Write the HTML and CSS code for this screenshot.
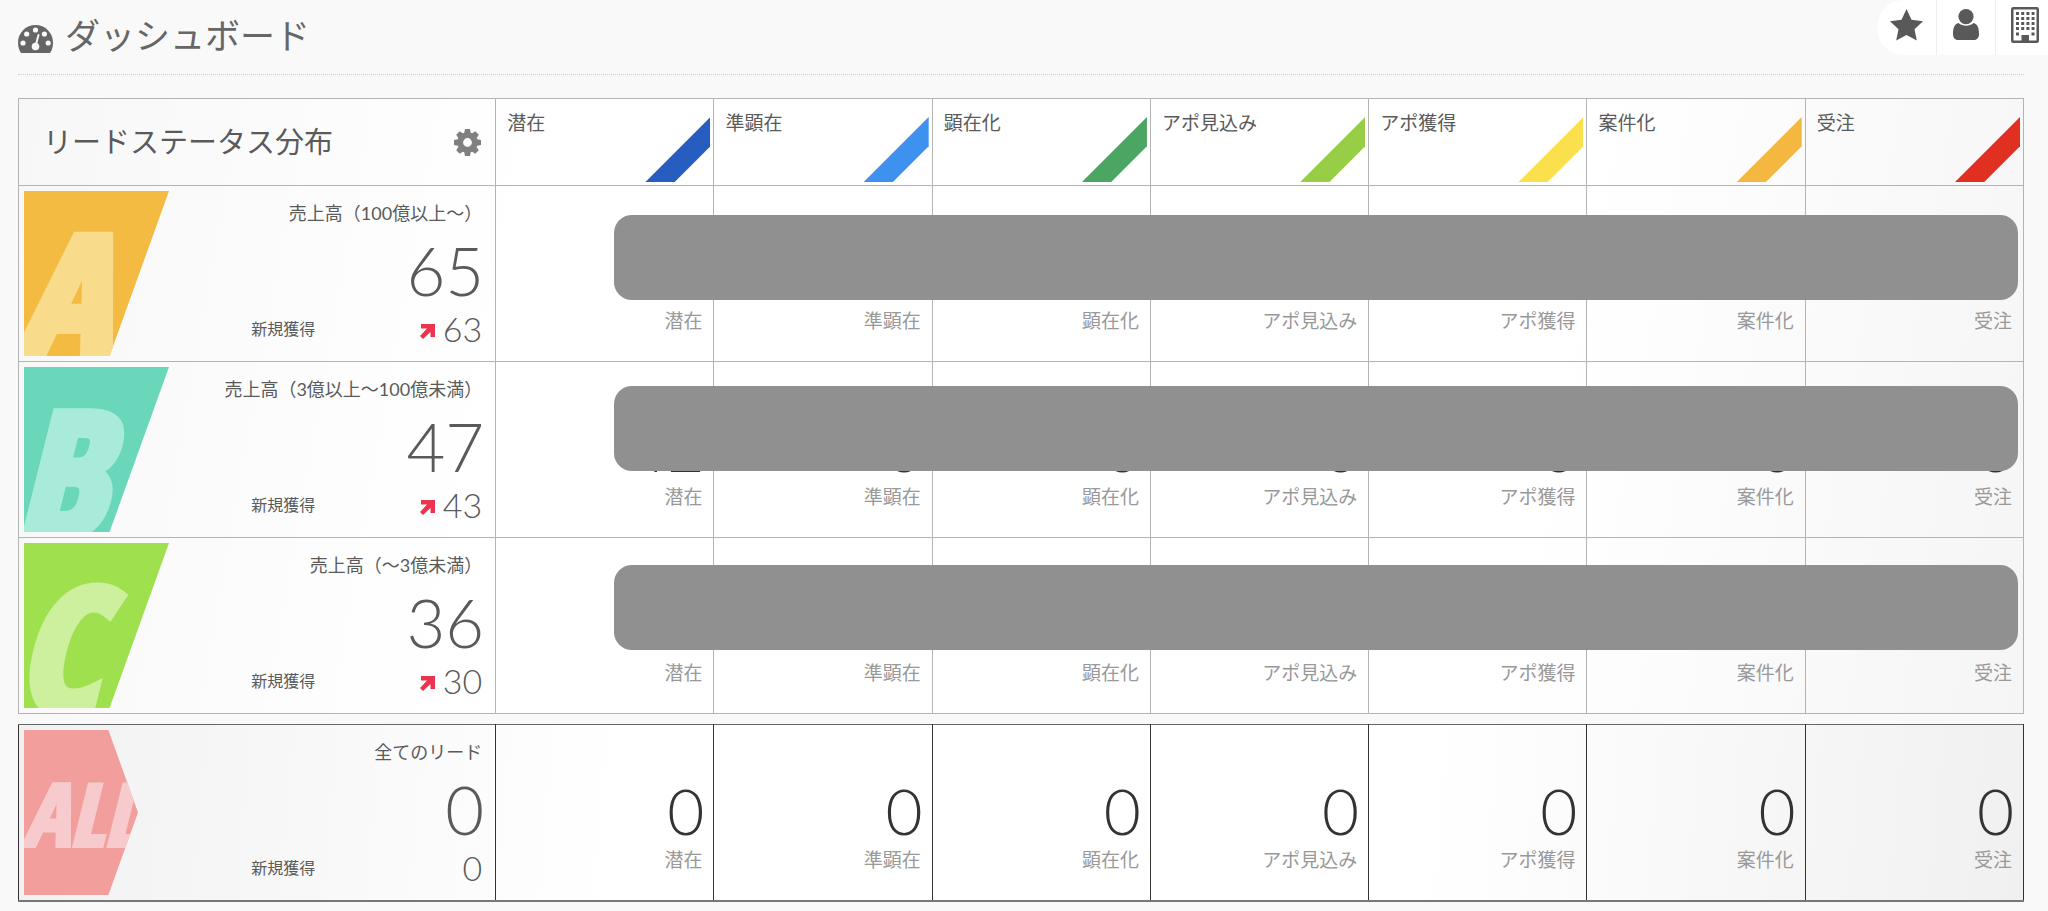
FILE: index.html
```html
<!DOCTYPE html>
<html lang="ja">
<head>
  <meta charset="UTF-8">
  <meta name="viewport" content="width=device-width, initial-scale=1.0">
  <title>ダッシュボード</title>
  <link rel="stylesheet" href="styles.css">
</head>
<body>
  <header class="page-header">
    <h1>
      <svg class="icon-dashboard" viewBox="0 0 35 28">
        <path fill="#666" d="M3 28C1 25 0 21.500 0 17.500a17.500 17.500 0 0 1 35 0c0 4-1 7.500-3 10.500z"/>
        <g fill="#f9f9f9">
          <circle cx="5" cy="18" r="2.600"/><circle cx="8.700" cy="9" r="2.600"/><circle cx="17.500" cy="5" r="2.600"/>
          <circle cx="26.400" cy="9" r="2.600"/><circle cx="30.200" cy="18" r="2.600"/><circle cx="17.500" cy="21.500" r="3.800"/>
        </g>
        <path stroke="#f9f9f9" stroke-width="2" stroke-linecap="round" d="M17.800 20L20.500 10"/>
      </svg>
      ダッシュボード
    </h1>
    <nav class="tools">
      <a href="#" aria-label="star">
        <svg width="33" height="32" viewBox="0 0 33 32"><path fill="#595959" d="M16.500 0l5 10.800 11.500 1.400-8.500 8 2.300 11.400-10.300-5.700-10.300 5.700 2.300-11.400-8.500-8 11.500-1.400z"/></svg>
      </a>
      <a href="#" aria-label="user">
        <svg width="26" height="31" viewBox="0 0 26 31"><circle cx="13" cy="7.600" r="7.600" fill="#595959"/><path fill="#595959" d="M5.500 14c4 3.600 11 3.600 15 0 4 .800 5.500 5 5.500 11 0 3.500-1.700 6-5 6H5c-3.300 0-5-2.500-5-6 0-6 1.500-10.200 5.500-11z"/></svg>
      </a>
      <a href="#" aria-label="building">
        <svg width="28" height="36" viewBox="0 0 28 36">
          <rect x="1.250" y="1.250" width="25.500" height="33.500" rx="1" fill="none" stroke="#595959" stroke-width="2.500"/>
          <path stroke="#595959" stroke-width="3" stroke-dasharray="3 2.200" d="M5 6.500h18.500M5 11.500h18.500M5 16.500h18.500M5 21.500h18.500"/>
          <path fill="#595959" d="M5 25.500h3v3H5zM20.500 25.500h3v3h-3zM10.500 28h7.500v7h-7.500z"/>
        </svg>
      </a>
    </nav>
  </header>

  <main>
    <table class="board">
      <thead>
        <tr>
          <th class="lead-col">
            <div class="board-title">
              <h2>リードステータス分布</h2>
              <button class="gear" aria-label="settings">
                <svg width="27" height="27" viewBox="0 0 27 27">
                  <g fill="#808080">
                    <path id="tooth" d="M11 0h5l1 5h-7zM11 27h5l1-5h-7z"/>
                    <use href="#tooth" transform="rotate(45 13.5 13.5)"/>
                    <use href="#tooth" transform="rotate(90 13.5 13.5)"/>
                    <use href="#tooth" transform="rotate(135 13.5 13.5)"/>
                  </g>
                  <circle cx="13.500" cy="13.500" r="7.300" fill="none" stroke="#808080" stroke-width="5.800"/>
                </svg>
              </button>
            </div>
          </th>
          <th><div class="status">潜在<span class="stripe navy"></span></div></th>
          <th><div class="status">準顕在<span class="stripe blue"></span></div></th>
          <th><div class="status">顕在化<span class="stripe green"></span></div></th>
          <th><div class="status">アポ見込み<span class="stripe lime"></span></div></th>
          <th><div class="status">アポ獲得<span class="stripe yellow"></span></div></th>
          <th><div class="status">案件化<span class="stripe orange"></span></div></th>
          <th><div class="status">受注<span class="stripe red"></span></div></th>
        </tr>
      </thead>
      <tbody>
        <tr class="rank-a">
          <td>
            <div class="lead">
              <div class="badge badge-a"><span>A</span></div>
              <div class="lead-info">
                <p class="range">売上高（100億以上～）</p>
                <p class="total">65</p>
                <p class="new"><span>新規獲得</span><span class="count"><svg class="arrow" viewBox="0 0 15 15"><path d="M1 0h14v13h-4.500V8L3 15l-3-3 7-7.500H1z"/></svg>63</span></p>
              </div>
            </div>
            <div class="mask"></div>
          </td>
          <td><div class="cell"><span class="num"></span>潜在</div></td>
          <td><div class="cell"><span class="num"></span>準顕在</div></td>
          <td><div class="cell"><span class="num"></span>顕在化</div></td>
          <td><div class="cell"><span class="num"></span>アポ見込み</div></td>
          <td><div class="cell"><span class="num"></span>アポ獲得</div></td>
          <td><div class="cell"><span class="num"></span>案件化</div></td>
          <td><div class="cell"><span class="num"></span>受注</div></td>
        </tr>
        <tr class="rank-b">
          <td>
            <div class="lead">
              <div class="badge badge-b"><span>B</span></div>
              <div class="lead-info">
                <p class="range">売上高（3億以上～100億未満）</p>
                <p class="total">47</p>
                <p class="new"><span>新規獲得</span><span class="count"><svg class="arrow" viewBox="0 0 15 15"><path d="M1 0h14v13h-4.500V8L3 15l-3-3 7-7.500H1z"/></svg>43</span></p>
              </div>
            </div>
            <div class="mask"></div>
          </td>
          <td><div class="cell"><span class="num">42</span>潜在</div></td>
          <td><div class="cell"><span class="num">0</span>準顕在</div></td>
          <td><div class="cell"><span class="num">0</span>顕在化</div></td>
          <td><div class="cell"><span class="num">0</span>アポ見込み</div></td>
          <td><div class="cell"><span class="num">0</span>アポ獲得</div></td>
          <td><div class="cell"><span class="num">0</span>案件化</div></td>
          <td><div class="cell"><span class="num">0</span>受注</div></td>
        </tr>
        <tr class="rank-c">
          <td>
            <div class="lead">
              <div class="badge badge-c"><span>C</span></div>
              <div class="lead-info">
                <p class="range">売上高（～3億未満）</p>
                <p class="total">36</p>
                <p class="new"><span>新規獲得</span><span class="count"><svg class="arrow" viewBox="0 0 15 15"><path d="M1 0h14v13h-4.500V8L3 15l-3-3 7-7.500H1z"/></svg>30</span></p>
              </div>
            </div>
            <div class="mask"></div>
          </td>
          <td><div class="cell"><span class="num"></span>潜在</div></td>
          <td><div class="cell"><span class="num"></span>準顕在</div></td>
          <td><div class="cell"><span class="num"></span>顕在化</div></td>
          <td><div class="cell"><span class="num"></span>アポ見込み</div></td>
          <td><div class="cell"><span class="num"></span>アポ獲得</div></td>
          <td><div class="cell"><span class="num"></span>案件化</div></td>
          <td><div class="cell"><span class="num"></span>受注</div></td>
        </tr>
      </tbody>
    </table>

    <table class="board board-all">
      <tbody>
        <tr>
          <td class="lead-col">
            <div class="lead">
              <div class="badge badge-all"><span>ALL</span></div>
              <div class="lead-info">
                <p class="range">全てのリード</p>
                <p class="total">0</p>
                <p class="new"><span>新規獲得</span><span class="count">0</span></p>
              </div>
            </div>
          </td>
          <td><div class="cell"><span class="num">0</span>潜在</div></td>
          <td><div class="cell"><span class="num">0</span>準顕在</div></td>
          <td><div class="cell"><span class="num">0</span>顕在化</div></td>
          <td><div class="cell"><span class="num">0</span>アポ見込み</div></td>
          <td><div class="cell"><span class="num">0</span>アポ獲得</div></td>
          <td><div class="cell"><span class="num">0</span>案件化</div></td>
          <td><div class="cell"><span class="num">0</span>受注</div></td>
        </tr>
      </tbody>
    </table>
  </main>
</body>
</html>
```
FILE: styles.css
```css
* {
  box-sizing: border-box;
}
body {
  margin: 0;
  background: #f9f9f9;
  color: #5a5a5a;
  font-family: Lato, "Noto Sans CJK JP", sans-serif;
  font-size: 19px;
  overflow-x: hidden;
}
h1, h2, p {
  margin: 0;
  font-weight: normal;
}

/* header */
.page-header {
  display: flex;
  justify-content: space-between;
  align-items: flex-start;
  height: 75px;
  margin: 0 24px 23px 18px;
  border-bottom: 1px dotted #d0d0d0;
}
h1 {
  display: flex;
  align-items: center;
  gap: 12px;
  height: 70px;
  color: #666;
  font-size: 35px;
  line-height: 70px;
}
.icon-dashboard {
  width: 35px;
  height: 28px;
  margin-top: 8px;
}
.tools {
  display: flex;
  margin-right: -30px;
  background: #fff;
  border-radius: 28px 0 0 28px;
}
.tools a {
  display: flex;
  align-items: center;
  justify-content: center;
  width: 59px;
  height: 55px;
  padding-bottom: 6px;
  border-left: 1px solid #eee;
}
.tools a:first-child {
  border-left: none;
}

/* table */
.board {
  width: calc(100% - 42px);
  margin: 0 24px 10px 18px;
  border-collapse: collapse;
  table-layout: fixed;
  background: linear-gradient(100deg, #f7f7f7, #fff 25%, #fff 75%, #f5f5f5);
}
.board th, .board td {
  padding: 0;
  border: 1px solid #b4b4b4;
  font-weight: normal;
  text-align: left;
}
.board .lead-col {
  width: 23.8%;
}
.board tr {
  position: relative;
}
.board-title {
  display: flex;
  align-items: center;
  justify-content: space-between;
  height: 86px;
  padding: 0 14px 0 24px;
}
h2 {
  padding-bottom: 4px;
  font-size: 29px;
}
.gear {
  display: flex;
  padding: 0;
  border: none;
  background: none;
  cursor: pointer;
}
.status {
  display: flex;
  justify-content: space-between;
  height: 86px;
  padding: 10px 3px 3px 11px;
  line-height: 28px;
}
.stripe {
  align-self: flex-end;
  width: 65px;
  height: 65px;
  clip-path: polygon(100% 0, 100% 45%, 45% 100%, 0 100%);
}
.navy { background: #275dc0; }
.blue { background: #3f91ef; }
.green { background: #4ca663; }
.lime { background: #97ce45; }
.yellow { background: #fbe04d; }
.orange { background: #f4b740; }
.red { background: #e03022; }

/* rank cell */
.lead {
  display: flex;
  height: 175px;
  padding: 5px 11px 5px 5px;
}
.badge {
  display: flex;
  align-items: flex-end;
  flex: none;
  width: 145px;
  overflow: hidden;
  clip-path: polygon(0 0, 100% 0, 59% 100%, 0 100%);
  font-family: "Open Sans Condensed", "Open Sans", sans-serif;
  font-size: 172px;
  font-stretch: condensed;
  font-style: italic;
  font-weight: 800;
  line-height: 126px;
  text-indent: -8px;
  -webkit-text-stroke: 10px;
}
.badge-a { background: #f4bb42; color: #f8dc8c; }
.badge-b { background: #6bd7ba; color: #a8ebda; }
.badge-c { background: #9fe04f; color: #cdf09e; }
.badge-all {
  align-items: center;
  width: 114px;
  background: #f29e9c;
  color: #f7cbcd;
  clip-path: polygon(0 0, 74% 0, 100% 50%, 74% 100%, 0 100%);
  font-size: 86px;
  text-indent: -1px;
  -webkit-text-stroke: 4px;
}
.lead-info {
  flex: 1;
  text-align: right;
}
.range {
  padding: 6px 2px 0 0;
  font-size: 18px;
  line-height: 32px;
}
.total {
  font-size: 67px;
  font-weight: 300;
  line-height: 83px;
}
.new {
  display: flex;
  justify-content: flex-end;
  align-items: center;
  padding-right: 2px;
  font-size: 16px;
  line-height: 34px;
}
.count {
  display: flex;
  justify-content: flex-end;
  align-items: center;
  gap: 8px;
  width: 167px;
  font-size: 34px;
  font-weight: 300;
}
.arrow {
  width: 15px;
  height: 15px;
  margin-top: 4px;
  fill: #ee3350;
}

/* status cell */
.cell {
  height: 175px;
  padding: 47px 11px 0;
  color: #999;
  line-height: 28px;
  text-align: right;
}
.num {
  display: block;
  height: 74px;
  margin-right: -2px;
  color: #333;
  font-size: 64px;
  font-weight: 300;
  line-height: 78px;
}

/* grey cover over the numbers */
.mask {
  position: absolute;
  left: 29.7%;
  right: 6px;
  height: 85px;
  border-radius: 18px;
  background: #909090;
}
.rank-a .mask { top: 29px; }
.rank-b .mask { top: 24px; }
.rank-c .mask { top: 27px; }

/* total row */
.board-all {
  margin-bottom: 8px;
  background: linear-gradient(95deg, #f1f1f1, #fff 30%, #fff 70%, #f0f0f0);
}
.board-all td {
  border: 1px solid #333;
  border-top-color: #666;
  border-bottom: 2px solid #777;
}
```
